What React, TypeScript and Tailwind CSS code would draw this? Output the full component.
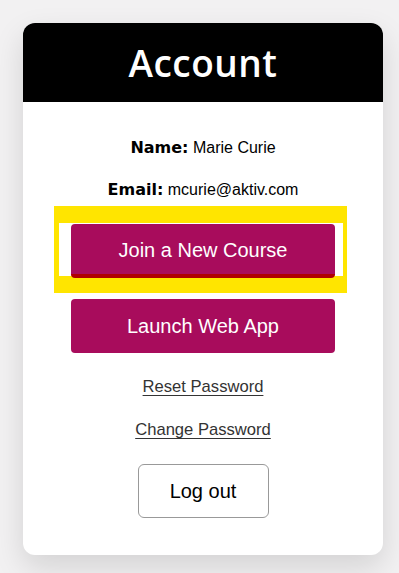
export default function App() {
  return (
    <div className="min-h-[573px] w-full bg-[#f2f1f2] pt-[23px] px-[23px] pb-[20px] font-['Liberation_Sans',Arial,sans-serif]">
      <div className="w-[360px] overflow-hidden rounded-[12px] bg-white shadow-[0_12px_30px_rgba(0,0,0,0.13)]">
        <div className="flex h-[79px] items-center justify-center bg-black">
          <h1 className="font-['Open_Sans',sans-serif] text-[37px] font-semibold leading-none text-white tracking-[0.5px]">
            Account
          </h1>
        </div>

        <div className="flex flex-col items-center pt-[34px] pb-[37px]">
          <p className="text-[16px] leading-6 text-black">
            <span className="font-['DejaVu_Sans',sans-serif] font-bold">Name:</span> Marie Curie
          </p>
          <p className="mt-[18px] text-[16px] leading-6 text-black">
            <span className="font-['DejaVu_Sans',sans-serif] font-bold">Email:</span> mcurie@aktiv.com
          </p>

          {/* highlighted button with annotation frame */}
          <div className="relative mt-[22px]">
            <div className="absolute -left-[17px] -top-[18px] -right-[12px] -bottom-[15px] border-t-[17px] border-b-[17px] border-l-[5px] border-r-[4px] border-[#ffe500] bg-white" />
            <button className="relative flex h-[54px] w-[264px] items-center justify-center rounded-[4px] border-b-[4px] border-[#b00000] bg-[#a80c5c] pt-[2px] text-[20px] text-white">
              Join a New Course
            </button>
          </div>

          <button className="mt-[21px] flex h-[54px] w-[264px] items-center justify-center rounded-[4px] bg-[#a80c5c] text-[20px] text-white">
            Launch Web App
          </button>

          <a className="mt-[22px] text-[16.6px] leading-6 text-[#333] underline underline-offset-[3px]" href="#">
            Reset Password
          </a>
          <a className="mt-[19px] text-[16.6px] leading-6 text-[#333] underline underline-offset-[3px]" href="#">
            Change Password
          </a>

          <button className="mt-[22px] flex h-[54px] w-[131px] items-center justify-center rounded-[6px] border border-[#999] bg-white text-[20px] text-black">
            Log out
          </button>
        </div>
      </div>
    </div>
  );
}
